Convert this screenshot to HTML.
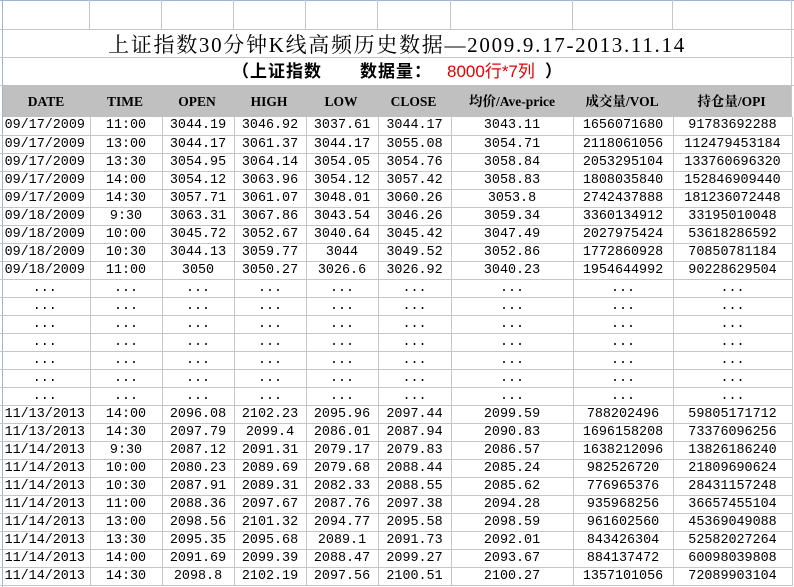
<!DOCTYPE html>
<html><head><meta charset="utf-8"><style>
body{margin:0;width:794px;height:587px;overflow:hidden;background:#fff;position:relative;font-family:"Liberation Mono","Noto Sans CJK SC",monospace;}
.g{position:absolute;background:#c6c6c6;}
.t{position:absolute;left:0;top:117px;border-collapse:collapse;table-layout:fixed}
.t tr{height:18px}
.t td{height:17px;max-height:17px;border-right:1px solid #c6c6c6;border-bottom:1px solid #c6c6c6;padding:0;text-align:center;font-size:13.4px;line-height:17px;white-space:nowrap;overflow:hidden;color:#000}
.h{position:absolute;top:85px;left:3px;width:788px;height:32px;background:#c0c0c0}
.h div{position:absolute;top:0;height:32px;line-height:34px;text-align:center;font-family:"Liberation Serif","Noto Serif CJK SC",serif;font-weight:bold;font-size:13.5px}
.s{position:absolute;top:58px;height:27px;line-height:28px;font-family:'Liberation Serif','Noto Sans CJK SC',serif;font-size:17px;font-weight:bold;white-space:nowrap;letter-spacing:1px}
</style></head><body>
<div class="g" style="left:0;top:0;width:794px;height:1px;background:#9fb5d4"></div>
<div class="g" style="left:2px;top:0;width:1px;height:587px;background:#9fb5d4"></div>
<div class="g" style="left:0;top:29px;width:794px;height:1px"></div>
<div class="g" style="left:0;top:57px;width:794px;height:1px"></div>
<div class="g" style="left:0;top:85px;width:794px;height:1px"></div>
<div class="g" style="left:89px;top:0;width:1px;height:29px"></div>
<div class="g" style="left:161px;top:0;width:1px;height:29px"></div>
<div class="g" style="left:233px;top:0;width:1px;height:29px"></div>
<div class="g" style="left:305px;top:0;width:1px;height:29px"></div>
<div class="g" style="left:377px;top:0;width:1px;height:29px"></div>
<div class="g" style="left:450px;top:0;width:1px;height:29px"></div>
<div class="g" style="left:572px;top:0;width:1px;height:29px"></div>
<div class="g" style="left:672px;top:0;width:1px;height:29px"></div>
<div class="g" style="left:791px;top:0;width:1px;height:117px"></div>
<div style="position:absolute;left:0;width:794px;top:30px;height:27px;line-height:30px;text-align:center;font-family:'Liberation Serif','Noto Serif CJK SC',serif;font-size:21px;letter-spacing:1.7px;white-space:nowrap">上证指数30分钟K线高频历史数据—2009.9.17-2013.11.14</div>
<div class="s" style="left:232px">（上证指数</div>
<div class="s" style="left:360px">数据量：</div>
<div class="s" style="left:447px;color:#e00000;font-weight:normal;font-family:'Liberation Sans','Noto Sans CJK SC',sans-serif;font-size:17px;letter-spacing:0">8000行*7列</div>
<div class="s" style="left:545px">）</div>
<div class="h">
<div style="left:0;width:86px">DATE</div>
<div style="left:86px;width:72px">TIME</div>
<div style="left:158px;width:72px">OPEN</div>
<div style="left:230px;width:72px">HIGH</div>
<div style="left:302px;width:72px">LOW</div>
<div style="left:374px;width:73px">CLOSE</div>
<div style="left:447px;width:124px">均价/Ave-price</div>
<div style="left:569px;width:100px">成交量/VOL</div>
<div style="left:669px;width:119px">持仓量/OPI</div>
</div>
<table class="t">
<colgroup><col style="width:90px"><col style="width:72px"><col style="width:72px"><col style="width:72px"><col style="width:72px"><col style="width:73px"><col style="width:122px"><col style="width:100px"><col style="width:119px"></colgroup>
<tr><td>09/17/2009</td><td>11:00</td><td>3044.19</td><td>3046.92</td><td>3037.61</td><td>3044.17</td><td>3043.11</td><td>1656071680</td><td>91783692288</td></tr>
<tr><td>09/17/2009</td><td>13:00</td><td>3044.17</td><td>3061.37</td><td>3044.17</td><td>3055.08</td><td>3054.71</td><td>2118061056</td><td>112479453184</td></tr>
<tr><td>09/17/2009</td><td>13:30</td><td>3054.95</td><td>3064.14</td><td>3054.05</td><td>3054.76</td><td>3058.84</td><td>2053295104</td><td>133760696320</td></tr>
<tr><td>09/17/2009</td><td>14:00</td><td>3054.12</td><td>3063.96</td><td>3054.12</td><td>3057.42</td><td>3058.83</td><td>1808035840</td><td>152846909440</td></tr>
<tr><td>09/17/2009</td><td>14:30</td><td>3057.71</td><td>3061.07</td><td>3048.01</td><td>3060.26</td><td>3053.8</td><td>2742437888</td><td>181236072448</td></tr>
<tr><td>09/18/2009</td><td>9:30</td><td>3063.31</td><td>3067.86</td><td>3043.54</td><td>3046.26</td><td>3059.34</td><td>3360134912</td><td>33195010048</td></tr>
<tr><td>09/18/2009</td><td>10:00</td><td>3045.72</td><td>3052.67</td><td>3040.64</td><td>3045.42</td><td>3047.49</td><td>2027975424</td><td>53618286592</td></tr>
<tr><td>09/18/2009</td><td>10:30</td><td>3044.13</td><td>3059.77</td><td>3044</td><td>3049.52</td><td>3052.86</td><td>1772860928</td><td>70850781184</td></tr>
<tr><td>09/18/2009</td><td>11:00</td><td>3050</td><td>3050.27</td><td>3026.6</td><td>3026.92</td><td>3040.23</td><td>1954644992</td><td>90228629504</td></tr>
<tr><td>...</td><td>...</td><td>...</td><td>...</td><td>...</td><td>...</td><td>...</td><td>...</td><td>...</td></tr>
<tr><td>...</td><td>...</td><td>...</td><td>...</td><td>...</td><td>...</td><td>...</td><td>...</td><td>...</td></tr>
<tr><td>...</td><td>...</td><td>...</td><td>...</td><td>...</td><td>...</td><td>...</td><td>...</td><td>...</td></tr>
<tr><td>...</td><td>...</td><td>...</td><td>...</td><td>...</td><td>...</td><td>...</td><td>...</td><td>...</td></tr>
<tr><td>...</td><td>...</td><td>...</td><td>...</td><td>...</td><td>...</td><td>...</td><td>...</td><td>...</td></tr>
<tr><td>...</td><td>...</td><td>...</td><td>...</td><td>...</td><td>...</td><td>...</td><td>...</td><td>...</td></tr>
<tr><td>...</td><td>...</td><td>...</td><td>...</td><td>...</td><td>...</td><td>...</td><td>...</td><td>...</td></tr>
<tr><td>11/13/2013</td><td>14:00</td><td>2096.08</td><td>2102.23</td><td>2095.96</td><td>2097.44</td><td>2099.59</td><td>788202496</td><td>59805171712</td></tr>
<tr><td>11/13/2013</td><td>14:30</td><td>2097.79</td><td>2099.4</td><td>2086.01</td><td>2087.94</td><td>2090.83</td><td>1696158208</td><td>73376096256</td></tr>
<tr><td>11/14/2013</td><td>9:30</td><td>2087.12</td><td>2091.31</td><td>2079.17</td><td>2079.83</td><td>2086.57</td><td>1638212096</td><td>13826186240</td></tr>
<tr><td>11/14/2013</td><td>10:00</td><td>2080.23</td><td>2089.69</td><td>2079.68</td><td>2088.44</td><td>2085.24</td><td>982526720</td><td>21809690624</td></tr>
<tr><td>11/14/2013</td><td>10:30</td><td>2087.91</td><td>2089.31</td><td>2082.33</td><td>2088.55</td><td>2085.62</td><td>776965376</td><td>28431157248</td></tr>
<tr><td>11/14/2013</td><td>11:00</td><td>2088.36</td><td>2097.67</td><td>2087.76</td><td>2097.38</td><td>2094.28</td><td>935968256</td><td>36657455104</td></tr>
<tr><td>11/14/2013</td><td>13:00</td><td>2098.56</td><td>2101.32</td><td>2094.77</td><td>2095.58</td><td>2098.59</td><td>961602560</td><td>45369049088</td></tr>
<tr><td>11/14/2013</td><td>13:30</td><td>2095.35</td><td>2095.68</td><td>2089.1</td><td>2091.73</td><td>2092.01</td><td>843426304</td><td>52582027264</td></tr>
<tr><td>11/14/2013</td><td>14:00</td><td>2091.69</td><td>2099.39</td><td>2088.47</td><td>2099.27</td><td>2093.67</td><td>884137472</td><td>60098039808</td></tr>
<tr><td>11/14/2013</td><td>14:30</td><td>2098.8</td><td>2102.19</td><td>2097.56</td><td>2100.51</td><td>2100.27</td><td>1357101056</td><td>72089903104</td></tr>
</table>
</body></html>
